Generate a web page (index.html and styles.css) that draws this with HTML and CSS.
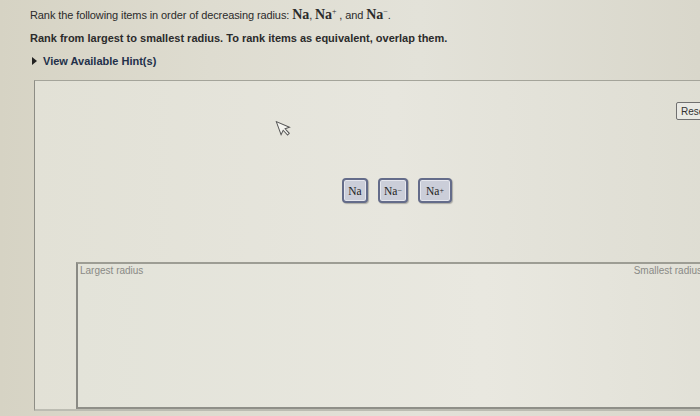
FILE: index.html
```html
<!DOCTYPE html>
<html>
<head>
<meta charset="utf-8">
<link rel="stylesheet" href="styles.css">
</head>
<body>
<div class="page">
  <div class="question">
    <p class="line1">Rank the following items in order of decreasing radius: <span class="chem">Na</span>, <span class="chem">Na<sup>+</sup></span> , and <span class="chem">Na<sup>&minus;</sup></span>.</p>
    <p class="line2">Rank from largest to smallest radius. To rank items as equivalent, overlap them.</p>
    <p class="hint"><span class="tri"></span>View Available Hint(s)</p>
  </div>
  <div class="workspace">
    <div class="topbar"><button class="reset">Reset</button></div>
    <div class="items">
      <span class="item">Na</span>
      <span class="item">Na<sup>&minus;</sup></span>
      <span class="item">Na<sup>+</sup></span>
    </div>
    <div class="rank">
      <div class="labels">
        <span class="lab">Largest radius</span>
        <span class="lab">Smallest radius</span>
      </div>
    </div>
    <svg class="cursor" width="14" height="20" viewBox="0 0 14 20"><path d="M1 1 L1 15 L4.5 11.5 L7 17.5 L9.2 16.5 L6.8 10.8 L11.5 10.8 Z" fill="#f4f4ef" stroke="#555" stroke-width="1"/></svg>
  </div>
</div>
</body>
</html>
```
FILE: styles.css
```css
html, body {
  margin: 0;
  padding: 0;
  overflow: hidden;
}
body {
  width: 700px;
  height: 416px;
  background: linear-gradient(90deg, #d6d3c4 0%, #dedcd0 30%, #e3e2d9 60%, #d9d7cb 100%);
  font-family: "Liberation Sans", Arial, sans-serif;
  color: #2b2b2b;
}
.page {
  width: 700px;
  height: 416px;
  display: flex;
  flex-direction: column;
}
.question {
  padding: 6px 0 0 30px;
}
.question p {
  margin: 0;
  font-size: 11px;
}
.line1 {
  line-height: 18px;
  letter-spacing: -0.1px;
}
.chem {
  font-family: "Liberation Serif", "Times New Roman", serif;
  font-weight: bold;
  font-size: 14px;
}
.chem sup, .item sup {
  font-size: 8px;
  font-weight: normal;
  vertical-align: 5px;
  line-height: 0;
}
.line2 {
  font-weight: bold;
  margin-top: 7px !important;
  line-height: 14px;
}
.hint {
  font-weight: bold;
  color: #22304a;
  margin-top: 9px !important;
  line-height: 14px;
  display: flex;
  align-items: center;
  padding-left: 2px;
}
.tri {
  width: 0;
  height: 0;
  border-left: 5px solid #222;
  border-top: 4px solid transparent;
  border-bottom: 4px solid transparent;
  margin-right: 6px;
}
.workspace {
  position: relative;
  margin: 12px 0 0 34px;
  width: 720px;
  flex: 1;
  border-top: 1px solid #a4a49a;
  border-left: 1px solid #8d8d85;
  border-bottom: 2px solid #bcbcb2;
  background: linear-gradient(90deg, #e2e1d6 0%, #e7e6de 50%, #dddcd1 100%);
  display: flex;
  flex-direction: column;
  margin-bottom: 5px;
}
.topbar {
  display: flex;
  justify-content: flex-start;
  padding: 21px 0 0 641px;
  height: 20px;
}
.reset {
  font-family: "Liberation Sans", Arial, sans-serif;
  font-size: 10px;
  color: #333;
  background: #e9e9e4;
  border: 1px solid #707070;
  border-radius: 2px;
  padding: 2px 4px;
  height: 18px;
}
.items {
  display: flex;
  gap: 10px;
  padding: 56px 0 0 307px;
}
.item {
  font-family: "Liberation Serif", "Times New Roman", serif;
  font-size: 11.5px;
  color: #222;
  background: #cbced9;
  border: 2px solid #646c8a;
  border-radius: 4px;
  box-shadow: inset 0 0 0 1px #e6e7ee, 1px 1px 1px rgba(0,0,0,0.25);
  height: 21px;
  box-sizing: content-box;
  padding: 0;
  display: flex;
  align-items: center;
  justify-content: center;
}
.item:nth-child(1) { width: 22px; }
.item:nth-child(2) { width: 26px; }
.item:nth-child(3) { width: 30px; }
.rank {
  margin: 59px 0 0 41px;
  flex: 1;
  border-top: 2px solid #9d9d94;
  border-left: 2px solid #8a8a84;
  border-bottom: 2px solid #8f8f88;
  background: linear-gradient(90deg, #e3e3d9 0%, #e9e8e0 60%, #e0dfd5 100%);
}
.labels {
  display: flex;
  justify-content: space-between;
  padding: 1px 0 0 2px;
  width: 622px;
}
.lab {
  font-size: 10px;
  color: #8a8a86;
}
.cursor {
  position: absolute;
  left: 243px;
  top: 37px;
  transform: rotate(-20deg);
}
```
